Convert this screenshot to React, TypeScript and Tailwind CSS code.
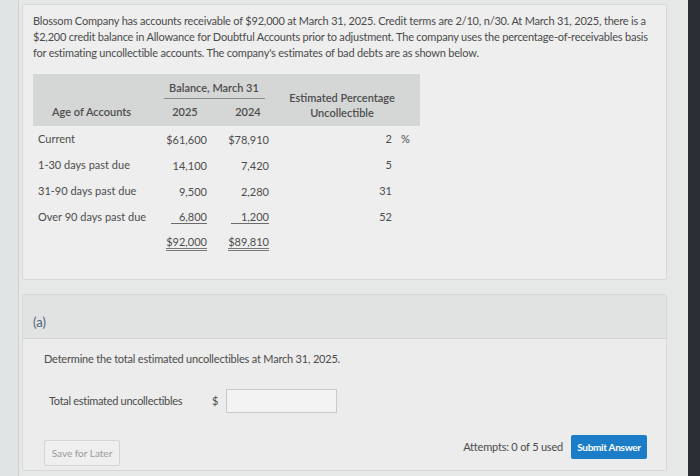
import React from 'react';

const rows = [
  { age: 'Current', y25: '$61,600', y24: '$78,910', pct: '2', sign: '%' },
  { age: '1-30 days past due', y25: '14,100', y24: '7,420', pct: '5', sign: '' },
  { age: '31-90 days past due', y25: '9,500', y24: '2,280', pct: '31', sign: '' },
  { age: 'Over 90 days past due', y25: '6,800', y24: '1,200', pct: '52', sign: '', last: true },
];

const AgingTable = () => (
  <div className="w-[387px] text-[11px] text-[#4d4d4d]">
    {/* header band */}
    <div className="flex h-[52px] bg-[#d5d6d6]">
      <div className="w-[127px] flex items-end justify-center pb-[6px] pr-[10px] font-semibold">Age of Accounts</div>
      <div className="w-[112px] flex flex-col items-center">
        <div className="mt-[6px] w-[101px] ml-[-4px] border-b border-[#8a8a8a] pb-[1px] text-center font-semibold">Balance, March 31</div>
        <div className="mt-auto pb-[6px] flex w-full font-semibold">
          <div className="w-[50px] text-center">2025</div>
          <div className="w-[62px] text-center pl-[14px]">2024</div>
        </div>
      </div>
      <div className="w-[140px] flex flex-col justify-center items-center pt-[10px] leading-[15px] font-semibold">
        <div>Estimated Percentage</div>
        <div>Uncollectible</div>
      </div>
    </div>
    {rows.map((r) => (
      <div key={r.age} className="flex h-[26px] items-center">
        <div className="w-[127px] pl-[5px]">{r.age}</div>
        <div className="w-[50px] flex justify-end pr-[3px]">
          <span className={r.last ? 'border-b border-[#6b6b6b] pl-[8px] leading-[13px]' : 'leading-[13px]'}>{r.y25}</span>
        </div>
        <div className="w-[62px] flex justify-end pr-[3px]">
          <span className={r.last ? 'border-b border-[#6b6b6b] pl-[10px] leading-[13px]' : 'leading-[13px]'}>{r.y24}</span>
        </div>
        <div className="w-[124px] text-right pr-[4px]">{r.pct}</div>
        <div className="w-[24px] pl-[5px]">{r.sign}</div>
      </div>
    ))}
    <div className="flex h-[26px] items-center">
      <div className="w-[127px]" />
      <div className="w-[50px] flex justify-end pr-[3px]">
        <span className="border-b-[3px] border-double border-[#7a7a7a] leading-[13px]">$92,000</span>
      </div>
      <div className="w-[62px] flex justify-end pr-[3px]">
        <span className="border-b-[3px] border-double border-[#7a7a7a] leading-[13px]">$89,810</span>
      </div>
    </div>
  </div>
);

export default function App() {
  return (
    <div className="w-[700px] h-[476px] overflow-hidden flex bg-[#e6e8e8] font-['Lato','Liberation_Sans',sans-serif] text-[#4b4b4b]">
      {/* left edge of the page */}
      <div className="w-[19px] bg-[#e1e4e4] border-r border-[#cfd2d2]" />

      <div className="w-[650px] pl-[3px] pt-[4px] flex flex-col">
        {/* question card */}
        <section className="shrink-0 w-[645px] h-[276px] bg-[#eeeeee] border border-[#d7d9d9] rounded-[2px] px-[10px] pt-[8px]">
          <p className="text-[11px] leading-[16px] tracking-[-0.2px] w-[625px]">
            Blossom Company has accounts receivable of $92,000 at March 31, 2025. Credit terms are 2/10, n/30. At March 31, 2025, there is a $2,200 credit balance in Allowance for Doubtful Accounts prior to adjustment. The company uses the percentage-of-receivables basis for estimating uncollectible accounts. The company's estimates of bad debts are as shown below.
          </p>
          <div className="mt-[13px]">
            <AgingTable />
          </div>
        </section>

        {/* part (a) */}
        <section className="shrink-0 mt-[14px] w-[645px] h-[177px] bg-[#ececec] border border-[#d7d9d9] rounded-[2px] flex flex-col">
          <div className="shrink-0 h-[44px] bg-[#e1e2e2] border-b border-[#d2d4d4] px-[10px] flex items-end pb-[7px]">
            <span className="text-[13px] leading-[18px] text-[#52637a]">(a)</span>
          </div>
          <div className="flex-1 px-[21px] pt-[13px] text-[11px]">
            <p className="tracking-[-0.2px] leading-[14px]">Determine the total estimated uncollectibles at March 31, 2025.</p>
            <div className="mt-[23px] ml-[5px] flex items-center">
              <span className="w-[163px] tracking-[-0.3px]">Total estimated uncollectibles</span>
              <span className="w-[14px]">$</span>
              <input className="w-[111px] h-[24px] bg-[#f3f3f3] border border-[#c9cbcb] outline-none" />
            </div>
            <div className="mt-[22px] flex items-start">
              <button className="w-[76px] h-[26px] mt-[5px] border border-[#d3d5d5] rounded-[2px] text-[10px] text-[#9a9a9a] bg-[#efefef]">Save for Later</button>
              <div className="ml-auto flex items-center gap-[8px] mr-[-2px]">
                <span className="tracking-[-0.2px]">Attempts: 0 of 5 used</span>
                <button className="w-[76px] h-[24px] rounded-[2px] bg-[#1b7cc8] text-white text-[10px] font-bold tracking-[-0.3px]">Submit Answer</button>
              </div>
            </div>
          </div>
        </section>
      </div>

      <div className="w-[19px]" />
      {/* monitor bezel */}
      <div className="w-[12px] bg-[#2b2f35]" />
    </div>
  );
}
